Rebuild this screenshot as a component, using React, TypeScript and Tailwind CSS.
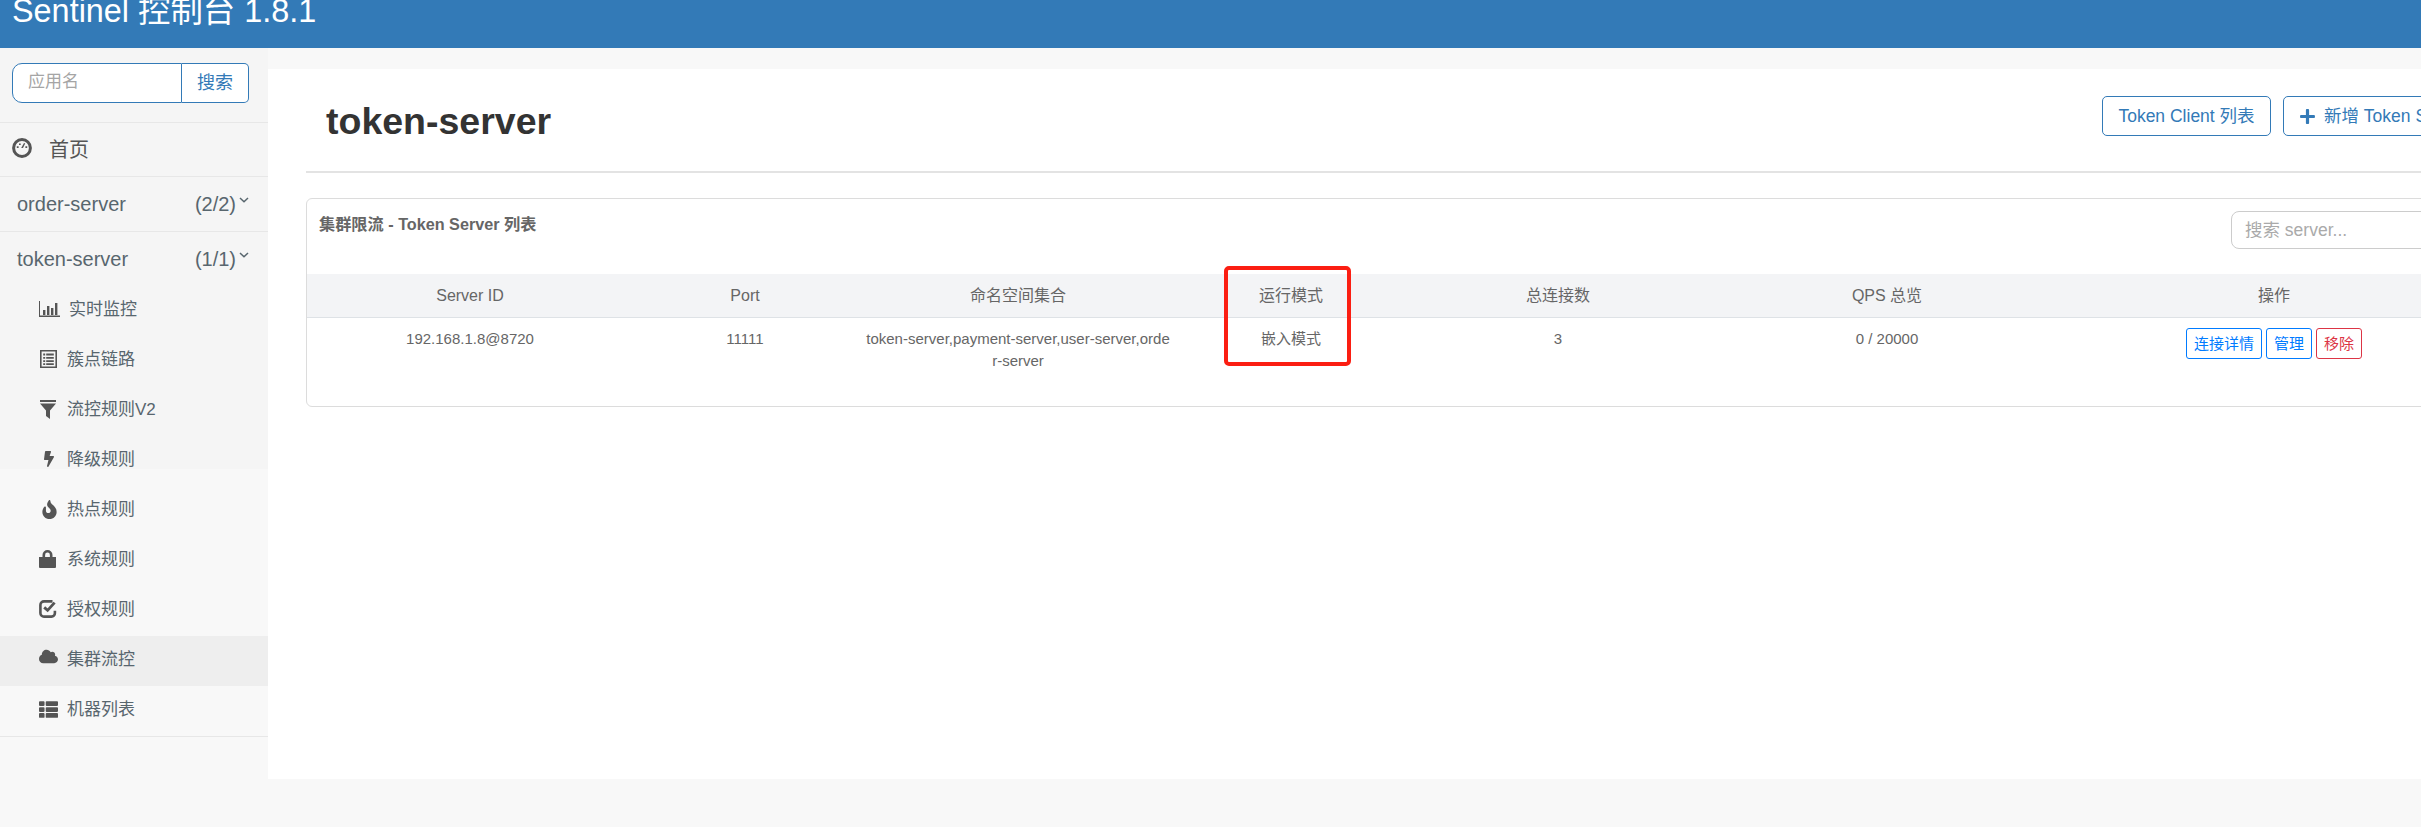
import React from "react";
import { FaBolt, FaFire, FaCloud, FaThList, FaPlus } from "react-icons/fa";

function Chevron() {
  return (
    <svg width="10" height="6" viewBox="0 0 10 6" className="absolute left-[239px] top-[20px]">
      <path d="M1 1 L5 4.8 L9 1" fill="none" stroke="#58666e" strokeWidth="1.5" />
    </svg>
  );
}

function Dashboard() {
  return (
    <svg width="20" height="20" viewBox="0 0 20 20">
      <circle cx="10" cy="10" r="8.4" fill="none" stroke="#555" strokeWidth="3" />
      <path d="M4.8 8.2h1.8V10H4.8zM7 5.4h1.7v1.7H7zM13.4 8.2h1.8V10h-1.8zM12 5l1.2.6-2.2 4.4H9.2z" fill="#555" />
    </svg>
  );
}
function Stats() {
  return (
    <svg width="21" height="16" viewBox="0 0 21 16">
      <path d="M0 0h1v14.6h21V16H0z" fill="#555" />
      <path d="M4 9h2.4v5H4zM8 5h2.4v9H8zM12 7h2.4v7H12zM16 2h2.4v12H16z" fill="#555" />
    </svg>
  );
}
function ListAlt() {
  return (
    <svg width="17" height="18" viewBox="0 0 17 18">
      <path fillRule="evenodd" d="M0 0h17v18H0zM1.6 1.6v14.8h13.8V1.6z" fill="#555" />
      <path d="M3.2 3.6h2v1.8h-2zM6.2 3.6h7.6v1.8H6.2zM3.2 7h2v1.8h-2zM6.2 7h7.6v1.8H6.2zM3.2 10.2h2V12h-2zM6.2 10.2h7.6V12H6.2zM3.2 13.2h2V15h-2zM6.2 13.2h7.6V15H6.2z" fill="#555" />
    </svg>
  );
}
function Filter() {
  return (
    <svg width="16" height="19" viewBox="0 0 16 19">
      <path d="M0 0h16v2H0zM0 3.6h16L10 10.4V19l-4-3v-5.6z" fill="#555" />
    </svg>
  );
}
function Lock() {
  return (
    <svg width="17" height="18" viewBox="0 0 17 18">
      <path fillRule="evenodd" d="M3.5 7V5a5 5 0 0 1 10 0v2H17v10a1 1 0 0 1-1 1H1a1 1 0 0 1-1-1V7zm2.6 0h4.8V5a2.4 2.4 0 0 0-4.8 0z" fill="#555" />
    </svg>
  );
}
function Check() {
  return (
    <svg width="18" height="18" viewBox="0 0 18 18">
      <path d="M13.5 1.4H5A3.6 3.6 0 0 0 1.4 5v8A3.6 3.6 0 0 0 5 16.6h7.5a3.4 3.4 0 0 0 3.4-3.4v-2.4" fill="none" stroke="#555" strokeWidth="2.6" />
      <path d="M5.2 7.4 8.6 10.4 15.6 2.6" fill="none" stroke="#555" strokeWidth="2.8" />
    </svg>
  );
}

const subItems: [string, React.ReactNode, string?][] = [
  ["实时监控", <Stats />, "wide"],
  ["簇点链路", <span className="ml-px flex"><ListAlt /></span>],
  ["流控规则V2", <span className="ml-px flex"><Filter /></span>],
  ["降级规则", <span className="ml-[2px] flex"><FaBolt size={16} color="#555" /></span>],
  ["热点规则", <span className="ml-px flex"><FaFire size={19} color="#555" /></span>],
  ["系统规则", <Lock />],
  ["授权规则", <Check />],
  ["集群流控", <span className="-mt-[5px] flex"><FaCloud size={19} color="#555" /></span>, "active"],
  ["机器列表", <FaThList size={19} color="#555" />],
];

const cols = [326, 224, 322, 224, 310, 348, 426];
const heads = ["Server ID", "Port", "命名空间集合", "运行模式", "总连接数", "QPS 总览", "操作"];
const cell = ["192.168.1.8@8720", "11111", "token-server,payment-server,user-server,order-server", "嵌入模式", "3", "0 / 20000"];

function SmallBtn({ children, danger }: { children: React.ReactNode; danger?: boolean }) {
  return (
    <button
      className={
        "h-[31px] px-[7px] text-[15px] leading-[29px] rounded-[3px] border bg-white " +
        (danger ? "border-[#dc3545] text-[#dc3545]" : "border-[#007bff] text-[#007bff]")
      }
    >
      {children}
    </button>
  );
}

export default function App() {
  return (
    <div className="h-[827px] w-full overflow-hidden bg-[#f8f8f8] font-['Liberation_Sans','Noto_Sans_CJK_SC',sans-serif] text-[#58666e]">
      <header className="h-12 overflow-hidden bg-[#337ab7] pl-3 text-[32.4px] leading-[22px] text-white whitespace-nowrap">
        Sentinel 控制台 1.8.1
      </header>
      <div className="flex items-start">
        <aside className="w-[268px] shrink-0 h-[779px] bg-[linear-gradient(#f5f5f5_421px,#f8f8f8_421px)]">
          <div className="pl-3 pt-[15px] h-[75px] border-b border-[#e7e7e7]">
            <div className="flex h-[40px] w-[237px] text-[#337ab7]">
              <div className="flex-1 rounded-l-[10px] border border-[#337ab7] bg-white pl-[15px] text-[17px] leading-[36px] text-[#a5a5a5]">应用名</div>
              <div className="w-[67px] rounded-r-[5px] border border-l-0 border-[#337ab7] bg-white text-center text-[18px] leading-[38px]">搜索</div>
            </div>
          </div>
          <div className="flex h-[54px] items-center border-b border-[#e7e7e7] pl-3 text-[20px] text-[#555]">
            <span className="-mt-[4px] flex w-[37px]"><Dashboard /></span>
            <span>首页</span>
          </div>
          {[["order-server", "(2/2)"], ["token-server", "(1/1)"]].map(([n, c], i) => (
            <div key={n} className={"relative flex items-center justify-between pl-[17px] pr-[32px] text-[20px] " + (i === 0 ? "h-[55px] border-b border-[#e7e7e7]" : "h-[54px]")}>
              <span>{n}</span>
              <span>{c}</span>
              <Chevron />
            </div>
          ))}
          <ul className="border-b border-[#e7e7e7]">
            {subItems.map(([label, icon, extra]) => (
              <li key={label} className={"flex h-[50px] items-center pb-[2px] text-[17px] " + (extra === "active" ? "bg-[#eeeeee]" : "")}>
                <span className={"ml-[39px] -mt-[2px] flex shrink-0 items-center " + (extra === "wide" ? "w-[30px]" : "w-[28px]")}>{icon}</span>
                <span>{label}</span>
              </li>
            ))}
          </ul>
        </aside>
        <main className="mt-[21px] h-[710px] w-[2153px] shrink-0 bg-white pl-[38px]">
          <div className="relative flex h-[104px] w-[2300px] items-start justify-between border-b-2 border-[#e3e3e3]">
            <h1 className="ml-[20px] mt-[30px] text-[37.5px] font-bold leading-[44px] text-[#333]">token-server</h1>
            <div className="mr-[83px] mt-[27px] flex gap-[12px] whitespace-nowrap text-[17.5px] text-[#337ab7]">
              <button className="h-[40px] w-[169px] rounded-[5px] border border-[#337ab7]">Token Client 列表</button>
              <button className="flex h-[40px] w-[240px] items-center rounded-[5px] border border-[#337ab7] pl-[15px]">
                <FaPlus size={17} className="mr-[8px]" />新增 Token Server
              </button>
            </div>
          </div>
          <section className="relative mt-[25px] h-[209px] w-[2300px] rounded-[6px] border border-[#dcdcdc] bg-white">
            <div className="flex h-[75px] items-start justify-between">
              <div className="ml-[12px] mt-[15px] text-[16.2px] font-bold leading-[20px] text-[#666]">集群限流 - Token Server 列表</div>
              <div className="mr-[159px] mt-[12px] h-[38px] w-[215px] rounded-[8px] border border-[#ccc] pl-[13px] text-[17.5px] leading-[36px] text-[#aaa]">搜索 server...</div>
            </div>
            <table className="w-[2180px] table-fixed text-center text-[16px] text-[#666]">
              <colgroup>
                {cols.map((w, i) => <col key={i} style={{ width: w }} />)}
              </colgroup>
              <thead>
                <tr className="h-[43px] border-b border-[#dee2e6] bg-[#f3f4f6]">
                  {heads.map((h) => <th key={h} className="pt-[2px] font-normal">{h}</th>)}
                </tr>
              </thead>
              <tbody>
                <tr>
                  {cell.map((c, i) => (
                    <td key={i} className="break-all px-[8px] pt-[10px] align-top text-[15px] leading-[22px]">{c}</td>
                  ))}
                  <td className="pt-[10px] align-top">
                    <div className="flex justify-center gap-[4px]">
                      <SmallBtn>连接详情</SmallBtn>
                      <SmallBtn>管理</SmallBtn>
                      <SmallBtn danger>移除</SmallBtn>
                    </div>
                  </td>
                </tr>
              </tbody>
            </table>
            <div className="absolute left-[917px] top-[67px] h-[100px] w-[127px] rounded-[5px] border-[4px] border-[#fb1e12]" />
          </section>
        </main>
      </div>
    </div>
  );
}
